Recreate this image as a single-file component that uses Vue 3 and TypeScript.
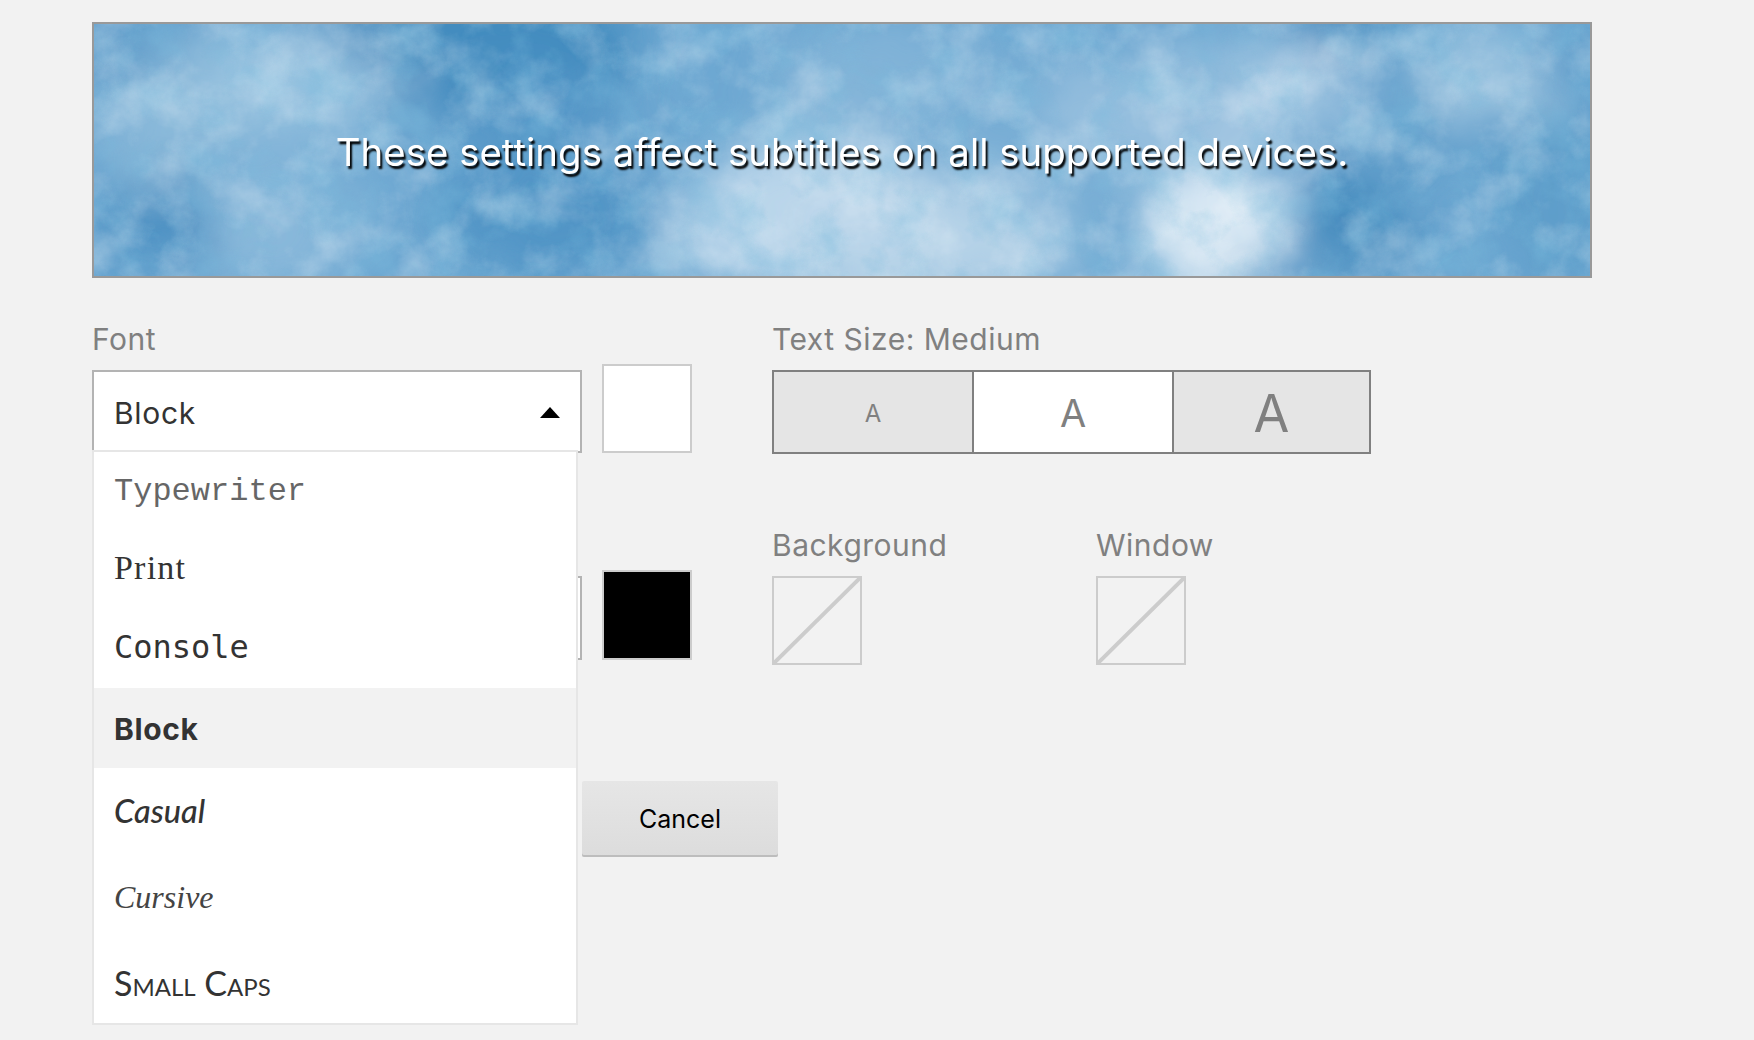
<script setup lang="ts">
interface Blob { x: number; y: number; rx: number; ry: number; c: string; o: number }
const blobs: Blob[] = [
  { x: 377, y: 20, rx: 170, ry: 70, c: '#3f88bd', o: 0.9 },
  { x: 30, y: 15, rx: 70, ry: 35, c: '#4a8fc2', o: 0.8 },
  { x: 66, y: 194, rx: 50, ry: 50, c: '#4188bd', o: 0.85 },
  { x: 447, y: 190, rx: 110, ry: 60, c: '#4a90c3', o: 0.8 },
  { x: 440, y: 90, rx: 90, ry: 50, c: '#4f93c4', o: 0.6 },
  { x: 202, y: 61, rx: 110, ry: 50, c: '#a8cce5', o: 0.8 },
  { x: 70, y: 90, rx: 70, ry: 70, c: '#9cc4e0', o: 0.6 },
  { x: 180, y: 200, rx: 80, ry: 70, c: '#97c0de', o: 0.65 },
  { x: 717, y: 190, rx: 130, ry: 80, c: '#c2daed', o: 0.9 },
  { x: 835, y: 215, rx: 150, ry: 70, c: '#bcd6ea', o: 0.9 },
  { x: 800, y: 60, rx: 120, ry: 60, c: '#90bbdc', o: 0.6 },
  { x: 1118, y: 205, rx: 70, ry: 80, c: '#e0edf7', o: 0.95 },
  { x: 1060, y: 90, rx: 130, ry: 60, c: '#a5c8e3', o: 0.7 },
  { x: 1198, y: 65, rx: 55, ry: 45, c: '#c2d9ec', o: 0.9 },
  { x: 1401, y: 55, rx: 75, ry: 45, c: '#a6cae3', o: 0.85 },
  { x: 1250, y: 6, rx: 60, ry: 30, c: '#3f88bd', o: 0.9 },
  { x: 1262, y: 194, rx: 55, ry: 55, c: '#4289bd', o: 0.9 },
  { x: 1320, y: 110, rx: 60, ry: 35, c: '#5a9ac8', o: 0.7 },
  { x: 1460, y: 170, rx: 70, ry: 90, c: '#5b9bc8', o: 0.8 },
  { x: 1480, y: 30, rx: 40, ry: 40, c: '#4f93c4', o: 0.7 },
  { x: 1190, y: 250, rx: 70, ry: 20, c: '#5b9bc8', o: 0.7 },
]

interface FontOption { name: string; cls: string }
const options: FontOption[] = [
  { name: 'Typewriter', cls: 'opt-typewriter' },
  { name: 'Print', cls: 'opt-print' },
  { name: 'Console', cls: 'opt-console' },
  { name: 'Block', cls: 'opt-block' },
  { name: 'Casual', cls: 'opt-casual' },
  { name: 'Cursive', cls: 'opt-cursive' },
  { name: 'Small Caps', cls: 'opt-caps' },
]
</script>

<template>
  <main class="page">
    <section class="preview">
      <svg class="sky" viewBox="0 0 1496 252" preserveAspectRatio="none" aria-hidden="true">
        <defs>
          <filter id="soft" x="-40%" y="-40%" width="180%" height="180%">
            <feTurbulence type="fractalNoise" baseFrequency="0.012" numOctaves="4" seed="7" result="n" />
            <feGaussianBlur in="SourceGraphic" stdDeviation="26" result="b" />
            <feDisplacementMap in="b" in2="n" scale="50" xChannelSelector="R" yChannelSelector="G" />
          </filter>
          <filter id="wisps" x="0" y="0" width="100%" height="100%">
            <feTurbulence type="fractalNoise" baseFrequency="0.02" numOctaves="7" seed="11" />
            <feColorMatrix type="matrix" values="0 0 0 0 1  0 0 0 0 1  0 0 0 0 1  2.4 0 0 0 -1" />
          </filter>
          <filter id="shade" x="0" y="0" width="100%" height="100%">
            <feTurbulence type="fractalNoise" baseFrequency="0.024" numOctaves="7" seed="23" />
            <feColorMatrix type="matrix" values="0 0 0 0 0.2  0 0 0 0 0.5  0 0 0 0 0.72  0 2.4 0 0 -1" />
          </filter>
        </defs>
        <rect width="1496" height="252" fill="#6ea8d2" />
        <g filter="url(#soft)">
          <ellipse v-for="(b, i) in blobs" :key="i" :cx="b.x" :cy="b.y" :rx="b.rx" :ry="b.ry" :fill="b.c" :opacity="b.o" />
        </g>
        <rect width="1496" height="252" filter="url(#shade)" opacity="0.4" />
        <rect width="1496" height="252" filter="url(#wisps)" opacity="0.25" />
      </svg>
      <p class="preview-text">These settings affect subtitles on all supported devices.</p>
    </section>

    <section class="controls">
      <div class="field">
        <div class="label">Font</div>
        <div class="picker">
          <div class="menu-anchor">
            <div class="select">
              <span class="select-value">Block</span>
              <i class="caret"></i>
            </div>
            <ul class="menu">
              <li v-for="o in options" :key="o.name" :class="['option', o.cls]">{{ o.name }}</li>
            </ul>
          </div>
          <div class="swatch swatch-white"></div>
        </div>
      </div>

      <div class="field">
        <div class="label">Text Size: Medium</div>
        <div class="sizes">
          <div class="size size-s">A</div>
          <div class="size size-m active">A</div>
          <div class="size size-l">A</div>
        </div>
      </div>

      <div class="field row-two">
        <div class="label label-blank"></div>
        <div class="picker">
          <div class="select select-blank"></div>
          <div class="swatch swatch-black"></div>
        </div>
      </div>

      <div class="pair row-two">
        <div class="field">
          <div class="label">Background</div>
          <div class="swatch swatch-none">
            <svg viewBox="0 0 86 86" preserveAspectRatio="none" aria-hidden="true"><line x1="0" y1="86" x2="86" y2="0" /></svg>
          </div>
        </div>
        <div class="field">
          <div class="label">Window</div>
          <div class="swatch swatch-none">
            <svg viewBox="0 0 86 86" preserveAspectRatio="none" aria-hidden="true"><line x1="0" y1="86" x2="86" y2="0" /></svg>
          </div>
        </div>
      </div>
    </section>

    <div class="actions">
      <button class="cancel" type="button">Cancel</button>
    </div>
  </main>
</template>

<style>
html, body { margin: 0; background: #f2f2f2; }
</style>

<style scoped>
.page {
  box-sizing: border-box;
  height: 1040px;
  padding: 22px 0 0 92px;
  overflow: hidden;
  font-family: Inter, "Liberation Sans", sans-serif;
}
.preview {
  position: relative;
  box-sizing: border-box;
  width: 1500px;
  height: 256px;
  border: 2px solid #999;
  display: flex;
  align-items: center;
  justify-content: center;
}
.sky { position: absolute; inset: 0; width: 100%; height: 100%; display: block; }
.preview-text {
  position: relative;
  margin: 4px 0 0;
  color: #fff;
  font-size: 38.45px;
  text-shadow: 2px 3px 2px #000;
  white-space: nowrap;
}
.controls {
  display: grid;
  grid-template-columns: 680px auto;
  margin-top: 42px;
}
.row-two { margin-top: 72px; }
.label {
  height: 44px;
  font-size: 30px;
  line-height: 38px;
  letter-spacing: 0.5px;
  color: #808080;
  white-space: nowrap;
}
.row-two .label { height: 50px; }
.row-two .label-blank { height: 44px; }
.picker { display: flex; align-items: flex-end; gap: 20px; }
.menu-anchor { position: relative; }
.select {
  box-sizing: border-box;
  width: 490px;
  height: 83px;
  padding: 0 20px;
  background: #fff;
  border: 2px solid #b3b3b3;
  display: flex;
  align-items: center;
  justify-content: space-between;
  font-size: 30px;
  color: #333;
}
.select-value { letter-spacing: 0.7px; padding-top: 2px; }
.caret {
  width: 0;
  height: 0;
  margin-top: 2px;
  border-left: 10px solid transparent;
  border-right: 10px solid transparent;
  border-bottom: 11px solid #000;
}
.menu {
  position: absolute;
  top: 80px;
  left: 0;
  box-sizing: border-box;
  width: 486px;
  margin: 0;
  padding: 0;
  list-style: none;
  background: #fff;
  border: 2px solid #e6e6e6;
  color: #333;
}
.option {
  box-sizing: border-box;
  display: flex;
  align-items: center;
  padding-left: 20px;
  white-space: nowrap;
}
.opt-typewriter { height: 78px; font: 32px "Liberation Mono", monospace; color: #666; }
.opt-print { height: 75px; font: 34px "Liberation Serif", serif; letter-spacing: 1.2px; }
.opt-console { height: 83px; font: 32px "DejaVu Sans Mono", monospace; }
.opt-block { height: 80px; font: 700 30px Inter, sans-serif; letter-spacing: 0.6px; background: #f2f2f2; padding-top: 2px; }
.opt-casual { height: 88px; font: italic 500 32.5px Lato, sans-serif; padding-bottom: 3px; }
.opt-cursive { height: 85px; font: italic 32px "Liberation Serif", serif; color: #444; padding-bottom: 2px; }
.opt-caps { height: 82px; font: small-caps 34px Lato, sans-serif; }
.swatch {
  box-sizing: border-box;
  width: 90px;
  height: 89px;
  border: 2px solid #ccc;
  flex: none;
}
.swatch-white { background: #fff; }
.swatch-black { background: #000; height: 90px; }
.row-two .select-blank { height: 84px; }
.swatch-none { height: 89px; }
.swatch-none svg { width: 100%; height: 100%; display: block; }
.swatch-none line { stroke: #ccc; stroke-width: 4; }
.sizes {
  box-sizing: border-box;
  display: flex;
  width: 599px;
  height: 84px;
  margin-top: 6px;
  border: 2px solid #808080;
}
.size {
  display: flex;
  align-items: center;
  justify-content: center;
  padding-top: 2px;
  background: #e5e5e5;
  color: #808080;
  font-family: Inter, sans-serif;
}
.size-s { width: 198px; font-size: 24px; border-right: 2px solid #808080; }
.size-m { width: 198px; font-size: 38px; border-right: 2px solid #808080; }
.size-l { flex: 1; font-size: 52px; }
.active { background: #fff; }
.pair { display: grid; grid-template-columns: 324px auto; }
.actions { margin: 116px 0 0 490px; }
.cancel {
  display: block;
  width: 196px;
  height: 76px;
  padding: 0;
  border: 0;
  border-radius: 2px;
  background: linear-gradient(#e6e6e6, #dcdcdc);
  box-shadow: inset 0 -2px 0 #bdbdbd;
  color: #000;
  font: 25px Inter, sans-serif;
}
</style>
